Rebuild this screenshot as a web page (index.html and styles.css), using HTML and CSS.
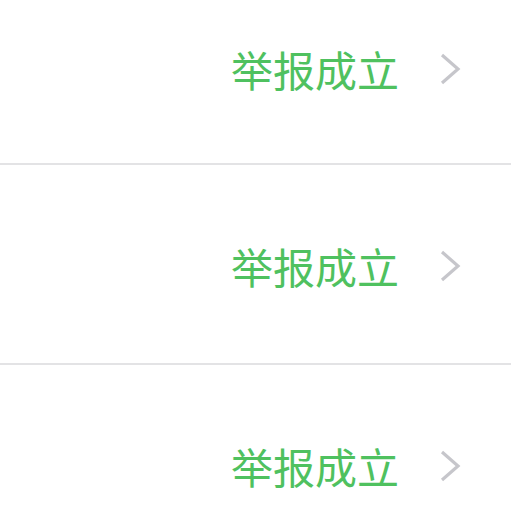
FILE: index.html
```html
<!DOCTYPE html>
<html lang="zh">
<head>
<meta charset="utf-8">
<link rel="stylesheet" href="styles.css">
</head>
<body>
<div class="list">
  <div class="row first">
    <div class="item">
      <span class="status">举报成立</span>
      <svg class="chev" width="22" height="32" viewBox="0 0 22 32"><polyline points="3,2 19,16 3,30" fill="none" stroke="#c6c6cb" stroke-width="3.2"/></svg>
    </div>
  </div>
  <div class="row">
    <div class="item">
      <span class="status">举报成立</span>
      <svg class="chev" width="22" height="32" viewBox="0 0 22 32"><polyline points="3,2 19,16 3,30" fill="none" stroke="#c6c6cb" stroke-width="3.2"/></svg>
    </div>
  </div>
  <div class="row last">
    <div class="item">
      <span class="status">举报成立</span>
      <svg class="chev" width="22" height="32" viewBox="0 0 22 32"><polyline points="3,2 19,16 3,30" fill="none" stroke="#c6c6cb" stroke-width="3.2"/></svg>
    </div>
  </div>
</div>
</body>
</html>
```

FILE: styles.css
```css
html, body {
  margin: 0;
  padding: 0;
  background: #ffffff;
}
body {
  font-family: "Noto Sans CJK SC", "Noto Sans", sans-serif;
  overflow: hidden;
}
.list {
  display: flex;
  flex-direction: column;
}
.row {
  box-sizing: border-box;
  height: 200px;
  padding-top: 80px;
  padding-right: 50px;
  display: flex;
  align-items: flex-start;
  justify-content: flex-end;
  border-bottom: 2px solid #e3e3e5;
}
.row.first {
  height: 165px;
  padding-top: 48px;
}
.row.last {
  height: 147px;
  border-bottom: none;
}
.item {
  display: flex;
  align-items: center;
  gap: 40px;
}
.status {
  color: #4fc15f;
  font-size: 42px;
  line-height: 42px;
  height: 42px;
}
.chev {
  display: block;
}
```
